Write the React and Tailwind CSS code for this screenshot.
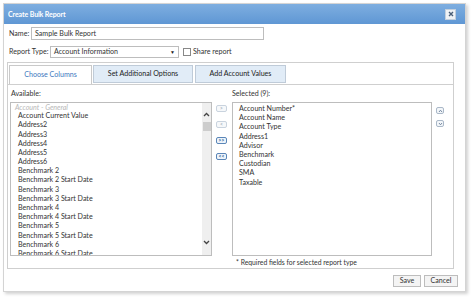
import React from "react";

const available = [
  "Account Current Value",
  "Address2",
  "Address3",
  "Address4",
  "Address5",
  "Address6",
  "Benchmark 2",
  "Benchmark 2 Start Date",
  "Benchmark 3",
  "Benchmark 3 Start Date",
  "Benchmark 4",
  "Benchmark 4 Start Date",
  "Benchmark 5",
  "Benchmark 5 Start Date",
  "Benchmark 6",
  "Benchmark 6 Start Date",
];

const selected = [
  "Account Number*",
  "Account Name",
  "Account Type",
  "Address1",
  "Advisor",
  "Benchmark",
  "Custodian",
  "SMA",
  "Taxable",
];

const MoveButton = ({ label, active }) => (
  <div
    className={
      "w-[11px] h-[7px] rounded-[2px] border flex items-center justify-center text-[5px] leading-none font-bold " +
      (active
        ? "border-[#5a86b8] bg-[#eef4fb] text-[#2d5d94]"
        : "border-[#c9d3de] bg-[#f6f8fa] text-[#a9b4c0]")
    }
  >
    {label}
  </div>
);

const Chevron = ({ up }) => (
  <svg width="7" height="5" viewBox="0 0 7 5">
    <path
      d={up ? "M1 4 L3.5 1.5 L6 4" : "M1 1 L3.5 3.5 L6 1"}
      fill="none"
      stroke="#444"
      strokeWidth="1.3"
    />
  </svg>
);

const OrderButton = ({ up }) => (
  <div className="w-[8px] h-[7px] rounded-[2px] border border-[#aab8c8] bg-[#f3f6f9] flex items-center justify-center">
    <svg width="5" height="4" viewBox="0 0 5 4">
      <path
        d={up ? "M1 3 L2.5 1.2 L4 3" : "M1 1 L2.5 2.8 L4 1"}
        fill="none"
        stroke="#6a7f98"
        strokeWidth="0.9"
      />
    </svg>
  </div>
);

export default function App() {
  return (
    <div
      className="w-[474px] h-[300px] bg-white pt-[3px] pl-[3px] text-[#333] text-[7.1px] leading-none"
      style={{ fontFamily: "'Segoe UI', Lato, 'Liberation Sans', sans-serif" }}
    >
      <div className="w-[463px] h-[289px] bg-white border border-[#d4d4d4] shadow-[2px_2px_3px_rgba(0,0,0,0.18)] flex flex-col">
        {/* title bar */}
        <div className="h-[20px] bg-gradient-to-b from-[#7eaee0] to-[#5f97d4] flex items-center justify-between px-[4px]">
          <span className="text-white font-bold text-[7px] tracking-[-0.1px]">Create Bulk Report</span>
          <div className="w-[11px] h-[11px] bg-[#eef2f6] border border-[#c2cfdd] flex items-center justify-center mr-[5px]">
            <svg width="6" height="6" viewBox="0 0 6 6">
              <path d="M1 1 L5 5 M5 1 L1 5" stroke="#4a5f78" strokeWidth="1.4" />
            </svg>
          </div>
        </div>

        <div className="flex-1 px-[4px] flex flex-col">
          {/* name row */}
          <div className="flex items-center mt-[3px] h-[13px]">
            <span className="ml-[1px] w-[22px] whitespace-nowrap">Name:</span>
            <div className="w-[233px] h-[13px] border border-[#bdbdbd] flex items-center pl-[3px]">
              Sample Bulk Report
            </div>
          </div>

          {/* report type row */}
          <div className="flex items-center mt-[6px] h-[12px]">
            <span className="ml-[1px] w-[41px] whitespace-nowrap">Report Type:</span>
            <div className="w-[129px] h-[12px] border border-[#bdbdbd] flex items-center justify-between pl-[3px] pr-[3px]">
              <span>Account Information</span>
              <span className="text-[5px] text-[#222]">▼</span>
            </div>
            <div className="ml-[4px] w-[8px] h-[8px] border border-[#888] bg-white" />
            <span className="ml-[2px]">Share report</span>
          </div>

          {/* tab box */}
          <div className="mt-[4px] ml-[-1px] w-[447px] h-[207px] border border-[#cfcfcf] flex flex-col">
            <div className="flex pt-[2px] pl-[1px] gap-[1px] h-[21px]">
              <div className="w-[83px] h-[19px] bg-white border border-[#c9c9c9] border-b-0 flex items-center justify-center text-[#3d78be]">
                Choose Columns
              </div>
              <div className="w-[100px] h-[18px] bg-[#e1ecf7] border border-[#bfcbd8] flex items-center justify-center text-[#222]">
                Set Additional Options
              </div>
              <div className="ml-[1px] w-[91px] h-[18px] bg-[#e1ecf7] border border-[#bfcbd8] flex items-center justify-center text-[#222]">
                Add Account Values
              </div>
            </div>

            <div className="flex-1 border-t border-[#cfcfcf] flex flex-col pl-[2px]">
              <div className="flex mt-[5px]">
                {/* available */}
                <div className="flex flex-col">
                  <span className="ml-[1px] h-[10px]">Available:</span>
                  <div className="mt-[2px] w-[202px] h-[154px] border border-[#bdbdbd] flex overflow-hidden">
                    <div className="flex-1 pl-[4px] pt-[1px] flex flex-col overflow-hidden">
                      <div className="h-[9.2px] flex items-center text-[#b8b8b8] italic whitespace-nowrap">
                        Account - General
                      </div>
                      {available.map((item) => (
                        <div key={item} className="h-[9.2px] flex items-center pl-[3px] whitespace-nowrap shrink-0">
                          {item}
                        </div>
                      ))}
                    </div>
                    <div className="w-[9px] bg-[#efefef] flex flex-col items-center">
                      <div className="mt-[9px]">
                        <Chevron up />
                      </div>
                      <div className="mt-[5px] w-[8px] h-[9px] bg-[#cdcdcd]" />
                      <div className="mt-auto mb-[10px]">
                        <Chevron />
                      </div>
                    </div>
                  </div>
                </div>

                {/* move buttons */}
                <div className="flex flex-col ml-[4px] mr-[5px] pt-[15px] gap-[9px]">
                  <MoveButton label=">" />
                  <MoveButton label="<" />
                  <MoveButton label=">>" active />
                  <MoveButton label="<<" active />
                </div>

                {/* selected */}
                <div className="flex flex-col">
                  <span className="h-[10px]">Selected (9):</span>
                  <div className="mt-[2px] w-[200px] h-[154px] border border-[#bdbdbd] pl-[6px] pt-[1px] flex flex-col">
                    {selected.map((item) => (
                      <div key={item} className="h-[9.2px] flex items-center whitespace-nowrap">
                        {item}
                      </div>
                    ))}
                  </div>
                </div>

                {/* order buttons */}
                <div className="flex flex-col ml-[4px] pt-[17px] gap-[6px]">
                  <OrderButton up />
                  <OrderButton />
                </div>
              </div>
              <div className="ml-[226px] mt-[3px] text-[6.8px]">* Required fields for selected report type</div>
            </div>
          </div>

          {/* footer */}
          <div className="flex justify-end gap-[3px] mt-[6px] mr-[3px]">
            <div className="w-[28px] h-[12px] border border-[#bdbdbd] bg-[#f4f4f4] flex items-center justify-center">
              Save
            </div>
            <div className="w-[34px] h-[12px] border border-[#bdbdbd] bg-[#f4f4f4] flex items-center justify-center">
              Cancel
            </div>
          </div>
        </div>
      </div>
    </div>
  );
}
